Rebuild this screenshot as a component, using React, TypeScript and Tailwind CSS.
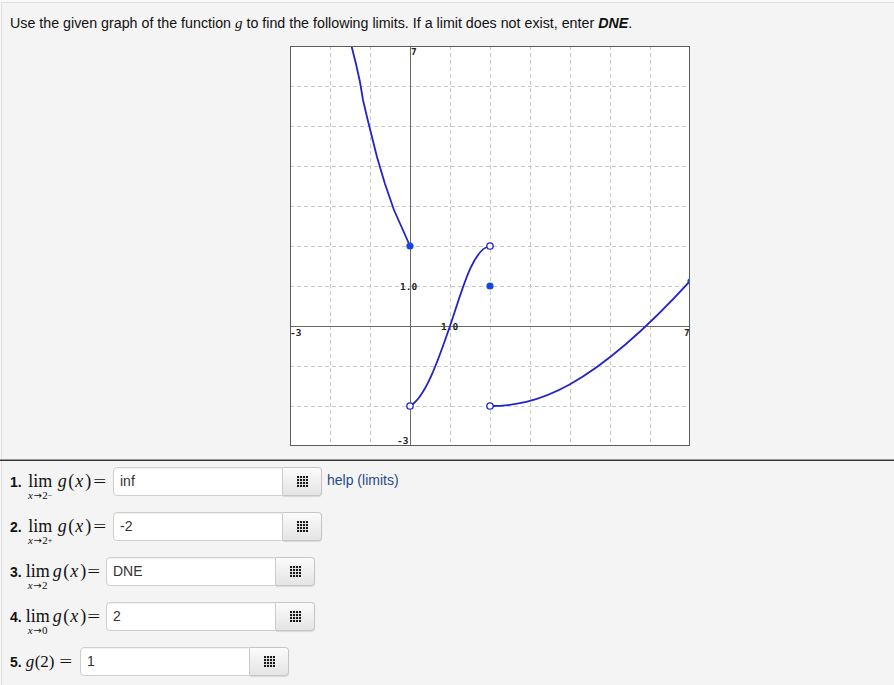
import React from "react";

function Keypad() {
  const cells: React.ReactNode[] = [];
  for (let r = 0; r < 4; r++) {
    for (let c = 0; c < 4; c++) {
      cells.push(<rect key={`${r}-${c}`} x={c * 3} y={r * 3} width="2.1" height="2.1" fill="#1a1a1a" />);
    }
  }
  return (
    <svg width="11" height="11" viewBox="0 0 11 11">
      {cells}
    </svg>
  );
}

function Graph() {
  const ticks = [40, 80, 160, 200, 240, 280, 320, 360];
  const hticks = [40, 80, 120, 160, 200, 240, 320, 360];
  const blue = "#2323c9";
  const dot = "#1646e0";
  return (
    <svg width="400" height="400" viewBox="0 0 400 400" className="block">
      <defs>
        <clipPath id="clipbox">
          <rect x="0" y="0" width="400" height="400" />
        </clipPath>
      </defs>
      <rect x="0" y="0" width="400" height="400" fill="#ffffff" />
      {ticks.map((v) => (
        <line key={`v${v}`} x1={v + 0.5} y1={0} x2={v + 0.5} y2={400} stroke="#c9c9c9" strokeWidth="1" strokeDasharray="4 3" />
      ))}
      {hticks.map((v) => (
        <line key={`h${v}`} x1={0} y1={v + 0.5} x2={400} y2={v + 0.5} stroke="#c9c9c9" strokeWidth="1" strokeDasharray="4 3" />
      ))}
      <line x1={120.5} y1={0} x2={120.5} y2={400} stroke="#6a6a6a" strokeWidth="1" />
      <line x1={0} y1={280.5} x2={400} y2={280.5} stroke="#6a6a6a" strokeWidth="1" />
      <g fontFamily="'DejaVu Sans Mono', 'Liberation Mono', monospace" fontWeight="bold" fontSize="9.5" fill="#222">
        <text x={121} y={9}>7</text>
        <text x={0} y={290}>-3</text>
        <text x={394} y={290}>7</text>
        <text x={107} y={398}>-3</text>
        <text x={110} y={244}>1.0</text>
        <text x={151} y={284}>1.0</text>
      </g>
      <g clipPath="url(#clipbox)" fill="none" stroke={blue} strokeWidth="1.8" strokeLinejoin="round" strokeLinecap="round">
        <path d="M61 -2 L66 18 L70 36 L73 54 L77 71 L82 91 L87 111 L95 138 L104 164 L112 182 L120 200" />
        <path d="M120 360 C135 352, 148 315, 160 280 C172 245, 182 205, 199 200" />
        <path d="M200 360 C245 360, 300 345, 402 233" />
      </g>
      <g clipPath="url(#clipbox)">
        <circle cx={120} cy={200} r={3.6} fill={dot} />
        <circle cx={200} cy={240} r={3.6} fill={dot} />
        <circle cx={400} cy={235} r={2.6} fill={dot} />
        <circle cx={200} cy={200} r={3.2} fill="#fff" stroke={blue} strokeWidth="1.3" />
        <circle cx={120} cy={360} r={3.2} fill="#fff" stroke={blue} strokeWidth="1.3" />
        <circle cx={200} cy={360} r={3.2} fill="#fff" stroke={blue} strokeWidth="1.3" />
      </g>
      <rect x="0.5" y="0.5" width="399" height="399" fill="none" stroke="#5c5c5c" strokeWidth="1" />
    </svg>
  );
}

function Gx() {
  return (
    <span className="font-['Liberation_Serif',serif] text-[18px] leading-[20px] text-[#111] whitespace-nowrap">
      <span className="italic">g</span>
      <span className="ml-[1.5px]">(</span>
      <span className="italic ml-[1px] mr-[2px]">x</span>
      <span>)</span>
    </span>
  );
}

function G2() {
  return (
    <span className="font-['Liberation_Serif',serif] text-[17px] leading-[20px] text-[#111] whitespace-nowrap">
      <span className="italic">g</span>
      <span className="ml-[0.5px]">(</span>
      <span>2</span>
      <span>)</span>
    </span>
  );
}

function Eq({ className }: { className: string }) {
  return (
    <span className={`inline-block w-[13px] text-center font-['Liberation_Serif',serif] text-[17px] leading-[20px] text-[#111] ${className}`}>
      <span className="inline-block scale-x-[1.35]">=</span>
    </span>
  );
}

function Lim({ to, sup, className }: { to: string; sup?: string; className: string }) {
  return (
    <span className={`inline-flex flex-col items-center shrink-0 ${className}`}>
      <span className="font-['Liberation_Serif',serif] text-[18px] leading-[20px] text-[#111]">lim</span>
      <span className="-mt-[1px] font-['Liberation_Serif',serif] text-[11px] leading-[10px] text-[#111] whitespace-nowrap">
        <span className="italic">x</span>
        <span className="font-['DejaVu_Sans',sans-serif] text-[10px] mx-[0.5px]">→</span>
        <span>{to}</span>
        {sup ? <sup className="text-[8px] relative -top-[1px]">{sup}</sup> : null}
      </span>
    </span>
  );
}

function Field({ value }: { value: string }) {
  return (
    <div className="flex h-[29px]">
      <div className="w-[170px] h-[29px] bg-white border border-[#cfcfcf] rounded-l-[4px] pl-[6px] text-[14px] leading-[27px] text-[#333] font-['Liberation_Sans',Arial,sans-serif] shadow-[inset_0_1px_1px_rgba(0,0,0,0.06)]">
        {value}
      </div>
      <div className="w-[39px] h-[29px] border border-l-0 border-[#c6c6c6] rounded-r-[4px] bg-gradient-to-b from-[#fbfbfb] to-[#e4e4e4] flex items-center justify-center shadow-[0_1px_1px_rgba(0,0,0,0.12)]">
        <Keypad />
      </div>
    </div>
  );
}

function Num({ n }: { n: string }) {
  return <span className="font-bold text-[14px] leading-[20px] text-[#111] font-['Liberation_Sans',Arial,sans-serif]">{n}</span>;
}

export default function App() {
  return (
    <div className="w-[894px] h-[685px] bg-[#f9f9f9] pt-[2px] pl-[1px] overflow-hidden">
      <div className="h-full bg-[#f4f4f4] border-t border-l border-[#dedede] font-['Liberation_Sans',Arial,sans-serif]">
        <div className="pl-[8px] pt-[10px]">
          <p className="text-[14.25px] leading-[20px] text-[#111] whitespace-nowrap">
            Use the given graph of the function{" "}
            <span className="font-['Liberation_Serif',serif] italic text-[15px]">g</span> to find the following limits. If a limit
            does not exist, enter <b className="italic">DNE</b>.
          </p>
          <div className="mt-[13px] ml-[280px]">
            <Graph />
          </div>
        </div>
        <div className="mt-[13px] -ml-[2px] h-[2px] border-t border-[#9a9a9a] border-b border-b-[#333]" />
        <div className="mt-[6px] pl-[8px] flex flex-col gap-[16px]">
          <div className="flex items-start h-[29px]">
            <div className="w-[103px] shrink-0 mt-[3px] flex items-baseline">
              <Num n="1." />
              <Lim to="2" sup="−" className="ml-[5px] w-[27px]" />
              <span className="ml-[4px]"><Gx /></span>
              <Eq className="ml-[2px]" />
            </div>
            <Field value="inf" />
            <span className="ml-[5px] text-[14px] leading-[27px] text-[#1f4b8a]">help (limits)</span>
          </div>
          <div className="flex items-start h-[29px]">
            <div className="w-[103px] shrink-0 mt-[3px] flex items-baseline">
              <Num n="2." />
              <Lim to="2" sup="+" className="ml-[5px] w-[27px]" />
              <span className="ml-[4px]"><Gx /></span>
              <Eq className="ml-[2px]" />
            </div>
            <Field value="-2" />
          </div>
          <div className="flex items-start h-[29px]">
            <div className="w-[96px] shrink-0 mt-[3px] flex items-baseline">
              <Num n="3." />
              <Lim to="2" className="ml-[4px] w-[24px]" />
              <span className="ml-[3px]"><Gx /></span>
              <Eq className="ml-[1px]" />
            </div>
            <Field value="DNE" />
          </div>
          <div className="flex items-start h-[29px]">
            <div className="w-[96px] shrink-0 mt-[3px] flex items-baseline">
              <Num n="4." />
              <Lim to="0" className="ml-[4px] w-[24px]" />
              <span className="ml-[3px]"><Gx /></span>
              <Eq className="ml-[1px]" />
            </div>
            <Field value="2" />
          </div>
          <div className="flex items-start h-[29px]">
            <div className="w-[70px] shrink-0 mt-[3px] flex items-baseline">
              <Num n="5." />
              <span className="ml-[4px]"><G2 /></span>
              <Eq className="ml-[5px]" />
            </div>
            <Field value="1" />
          </div>
        </div>
      </div>
    </div>
  );
}
